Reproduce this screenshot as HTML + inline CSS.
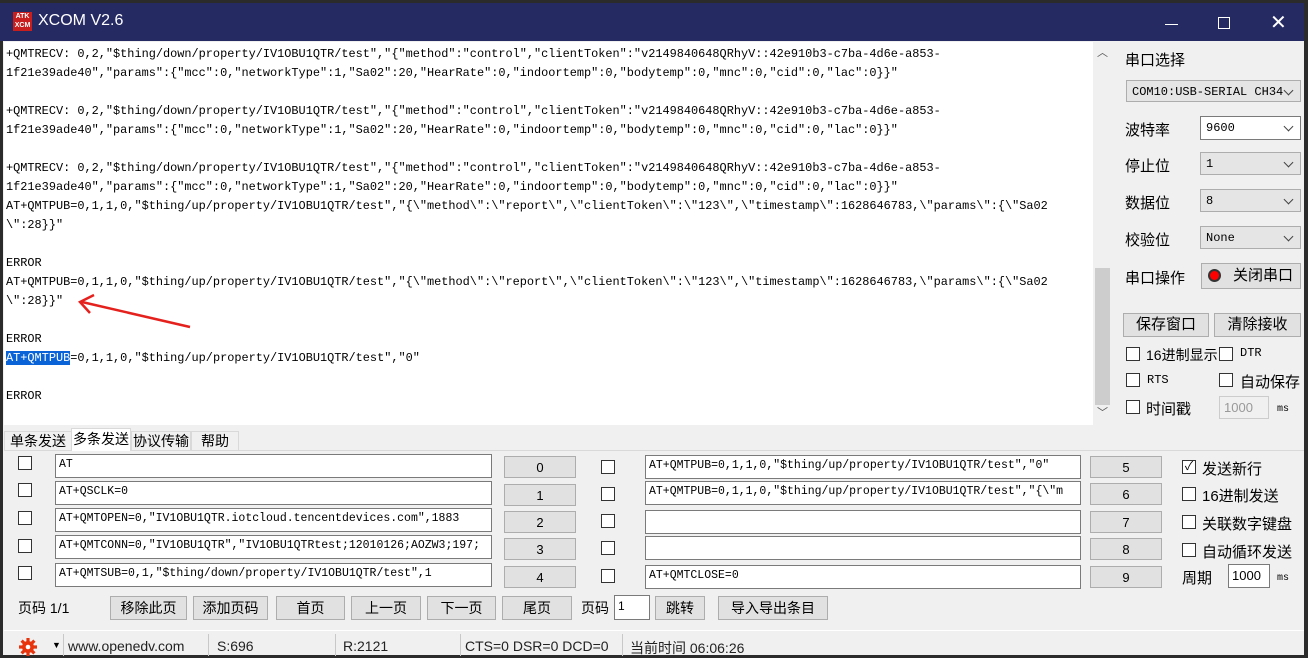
<!DOCTYPE html>
<html><head><meta charset="utf-8"><style>
*{box-sizing:border-box;margin:0;padding:0}
body{width:1308px;height:658px;background:#2b2b2b;position:relative;overflow:hidden;font-family:"Liberation Sans","Noto Sans CJK SC",sans-serif;font-size:14px;color:#000}
.a{position:absolute;white-space:nowrap}
#title{left:0;top:3px;width:1304px;height:38px;background:#252a63;color:#fff}
#win{left:3px;top:41px;width:1301px;height:614px;background:#f0f0f0}
#rx{left:4px;top:42px;width:1089px;height:383px;background:#fff;font-family:"Liberation Mono","Noto Sans CJK SC",monospace;font-size:11.9px;line-height:19px;white-space:pre;padding:3px 0 0 2px;overflow:hidden}
.lbl{font-size:15px}
.cb{position:absolute;width:14px;height:14px;border:1px solid #333;background:#fff}
.btn{position:absolute;background:#e1e1e1;border:1px solid #adadad;text-align:center;font-size:14px;white-space:nowrap}
.inp{position:absolute;background:#fff;border:1px solid #7a7a7a;font-family:"Liberation Mono","Noto Sans CJK SC",monospace;font-size:11.5px;padding:3px 0 0 3px;white-space:pre;overflow:hidden}
.combo{position:absolute;border:1px solid #adadad;background:#e5e5e5;font-size:12px;padding:4px 0 0 5px;font-family:"Liberation Mono",monospace;white-space:nowrap;overflow:hidden}
.combo:after{content:"";position:absolute;right:8px;top:6px;width:6px;height:6px;border-right:1px solid #444;border-bottom:1px solid #444;transform:rotate(45deg);background:inherit}
.sep{position:absolute;top:634px;width:1px;height:22px;background:#c8c8c8}
.st{position:absolute;top:638px;font-size:14px;color:#222;white-space:nowrap}
.tab{position:absolute;top:431px;height:20px;border:1px solid #d9d9d9;font-size:14px;line-height:18px;white-space:nowrap;overflow:hidden;text-align:center}
</style></head><body>
<div id="title" class="a">
 <div class="a" style="left:13px;top:9px;width:19px;height:19px;background:#c81e1e;color:#fff;font-size:7px;line-height:9px;text-align:center;font-weight:bold">ATK<br>XCM</div>
 <div class="a" style="left:38px;top:9px;font-size:16px">XCOM V2.6</div>
 <div class="a" style="left:1165px;top:21px;width:13px;height:1px;background:#fff"></div>
 <div class="a" style="left:1218px;top:14px;width:12px;height:12px;border:1px solid #fff"></div>
 <div class="a" style="left:1270px;top:7px;font-size:20px;font-weight:300">✕</div>
</div>
<div id="win" class="a"></div>
<div id="rx" class="a">+QMTRECV: 0,2,"$thing/down/property/IV1OBU1QTR/test","{"method":"control","clientToken":"v2149840648QRhyV::42e910b3-c7ba-4d6e-a853-
1f21e39ade40","params":{"mcc":0,"networkType":1,"Sa02":20,"HearRate":0,"indoortemp":0,"bodytemp":0,"mnc":0,"cid":0,"lac":0}}"

+QMTRECV: 0,2,"$thing/down/property/IV1OBU1QTR/test","{"method":"control","clientToken":"v2149840648QRhyV::42e910b3-c7ba-4d6e-a853-
1f21e39ade40","params":{"mcc":0,"networkType":1,"Sa02":20,"HearRate":0,"indoortemp":0,"bodytemp":0,"mnc":0,"cid":0,"lac":0}}"

+QMTRECV: 0,2,"$thing/down/property/IV1OBU1QTR/test","{"method":"control","clientToken":"v2149840648QRhyV::42e910b3-c7ba-4d6e-a853-
1f21e39ade40","params":{"mcc":0,"networkType":1,"Sa02":20,"HearRate":0,"indoortemp":0,"bodytemp":0,"mnc":0,"cid":0,"lac":0}}"
AT+QMTPUB=0,1,1,0,"$thing/up/property/IV1OBU1QTR/test","{\"method\":\"report\",\"clientToken\":\"123\",\"timestamp\":1628646783,\"params\":{\"Sa02
\":28}}"

ERROR
AT+QMTPUB=0,1,1,0,"$thing/up/property/IV1OBU1QTR/test","{\"method\":\"report\",\"clientToken\":\"123\",\"timestamp\":1628646783,\"params\":{\"Sa02
\":28}}"

ERROR
<span style="background:#0a64d8;color:#fff">AT+QMTPUB</span>=0,1,1,0,"$thing/up/property/IV1OBU1QTR/test","0"

ERROR</div>
<svg class="a" style="left:70px;top:290px" width="130" height="50"><line x1="120" y1="37" x2="12" y2="12" stroke="#e5211d" stroke-width="2.5"/><path d="M24 5 L10 12 L20 23" fill="none" stroke="#e5211d" stroke-width="2.5"/></svg>
<!-- scrollbar -->
<div class="a" style="left:1093px;top:42px;width:19px;height:383px;background:#f0f0f0"></div>
<div class="a" style="left:1095px;top:268px;width:15px;height:137px;background:#cdcdcd"></div>
<div class="a" style="left:1097px;top:44px;font-size:11px;color:#555">︿</div>
<div class="a" style="left:1097px;top:404px;font-size:11px;color:#555">﹀</div>
<!-- right panel -->
<div class="a lbl" style="left:1125px;top:49px">串口选择</div>
<div class="combo" style="left:1126px;top:80px;width:175px;height:22px;padding-right:20px">COM10:USB-SERIAL CH34</div>
<div class="a lbl" style="left:1125px;top:119px">波特率</div>
<div class="combo" style="left:1200px;top:116px;width:101px;height:24px;background:#fff;border-color:#7a7a7a">9600</div>
<div class="a lbl" style="left:1125px;top:155px">停止位</div>
<div class="combo" style="left:1200px;top:152px;width:101px;height:23px">1</div>
<div class="a lbl" style="left:1125px;top:192px">数据位</div>
<div class="combo" style="left:1200px;top:189px;width:101px;height:23px">8</div>
<div class="a lbl" style="left:1125px;top:229px">校验位</div>
<div class="combo" style="left:1200px;top:226px;width:101px;height:23px">None</div>
<div class="a lbl" style="left:1125px;top:267px">串口操作</div>
<div class="btn" style="left:1201px;top:263px;width:100px;height:26px;padding-left:24px;line-height:24px;font-size:15px">关闭串口</div>
<div class="a" style="left:1208px;top:269px;width:13px;height:13px;border-radius:50%;background:#f00;border:2px solid #333"></div>
<div class="btn" style="left:1123px;top:313px;width:86px;height:24px;line-height:22px;font-size:15px">保存窗口</div>
<div class="btn" style="left:1214px;top:313px;width:87px;height:24px;line-height:22px;font-size:15px">清除接收</div>
<div class="cb" style="left:1126px;top:347px"></div><div class="a" style="left:1146px;top:345px;font-size:14px">16进制显示</div>
<div class="cb" style="left:1219px;top:347px"></div><div class="a" style="left:1240px;top:346px;font-size:12px;font-family:'Liberation Mono'">DTR</div>
<div class="cb" style="left:1126px;top:373px"></div><div class="a" style="left:1147px;top:373px;font-size:12px;font-family:'Liberation Mono'">RTS</div>
<div class="cb" style="left:1219px;top:373px"></div><div class="a" style="left:1240px;top:371px;font-size:15px">自动保存</div>
<div class="cb" style="left:1126px;top:400px"></div><div class="a" style="left:1146px;top:398px;font-size:15px">时间戳</div>
<div class="a" style="left:1219px;top:396px;width:50px;height:23px;border:1px solid #ccc;background:#f0f0f0;color:#999;font-size:13px;padding:3px 0 0 4px">1000</div>
<div class="a" style="left:1277px;top:404px;font-size:10px;font-family:'Liberation Mono'">ms</div>
<!-- tabs -->
<div class="a" style="left:4px;top:450px;width:1300px;height:1px;background:#d9d9d9"></div>
<div class="tab" style="left:4px;width:68px;background:#f0f0f0">单条发送</div>
<div class="tab" style="left:71px;top:428px;width:60px;height:23px;border-bottom:none;background:#fff;line-height:20px">多条发送</div>
<div class="tab" style="left:131px;width:60px">协议传输</div>
<div class="tab" style="left:191px;width:48px">帮助</div>
<div class="a" style="left:4px;top:451px;width:1300px;height:175px;background:#f0f0f0"></div>
<!-- rows -->
<div class="cb" style="left:18px;top:456px"></div><div class="inp" style="left:55px;top:454px;width:437px;height:24px">AT</div><div class="btn" style="left:504px;top:456px;width:72px;height:22px;line-height:22px;font-size:13px">0</div>
<div class="cb" style="left:18px;top:483px"></div><div class="inp" style="left:55px;top:481px;width:437px;height:24px">AT+QSCLK=0</div><div class="btn" style="left:504px;top:484px;width:72px;height:22px;line-height:22px;font-size:13px">1</div>
<div class="cb" style="left:18px;top:511px"></div><div class="inp" style="left:55px;top:508px;width:437px;height:24px">AT+QMTOPEN=0,"IV1OBU1QTR.iotcloud.tencentdevices.com",1883</div><div class="btn" style="left:504px;top:511px;width:72px;height:22px;line-height:22px;font-size:13px">2</div>
<div class="cb" style="left:18px;top:539px"></div><div class="inp" style="left:55px;top:535px;width:437px;height:24px">AT+QMTCONN=0,"IV1OBU1QTR","IV1OBU1QTRtest;12010126;AOZW3;197;</div><div class="btn" style="left:504px;top:538px;width:72px;height:22px;line-height:22px;font-size:13px">3</div>
<div class="cb" style="left:18px;top:566px"></div><div class="inp" style="left:55px;top:563px;width:437px;height:24px">AT+QMTSUB=0,1,"$thing/down/property/IV1OBU1QTR/test",1</div><div class="btn" style="left:504px;top:566px;width:72px;height:22px;line-height:22px;font-size:13px">4</div>

<div class="cb" style="left:601px;top:460px"></div><div class="inp" style="left:645px;top:455px;width:436px;height:24px">AT+QMTPUB=0,1,1,0,"$thing/up/property/IV1OBU1QTR/test","0"</div><div class="btn" style="left:1090px;top:456px;width:72px;height:22px;line-height:22px;font-size:13px">5</div>
<div class="cb" style="left:601px;top:487px"></div><div class="inp" style="left:645px;top:481px;width:436px;height:24px">AT+QMTPUB=0,1,1,0,"$thing/up/property/IV1OBU1QTR/test","{\"m</div><div class="btn" style="left:1090px;top:483px;width:72px;height:22px;line-height:22px;font-size:13px">6</div>
<div class="cb" style="left:601px;top:514px"></div><div class="inp" style="left:645px;top:510px;width:436px;height:24px"></div><div class="btn" style="left:1090px;top:511px;width:72px;height:22px;line-height:22px;font-size:13px">7</div>
<div class="cb" style="left:601px;top:541px"></div><div class="inp" style="left:645px;top:536px;width:436px;height:24px"></div><div class="btn" style="left:1090px;top:538px;width:72px;height:22px;line-height:22px;font-size:13px">8</div>
<div class="cb" style="left:601px;top:569px"></div><div class="inp" style="left:645px;top:565px;width:436px;height:24px">AT+QMTCLOSE=0</div><div class="btn" style="left:1090px;top:566px;width:72px;height:22px;line-height:22px;font-size:13px">9</div>

<div class="cb" style="left:1182px;top:460px;text-align:center;line-height:11px;font-size:12px">✓</div><div class="a" style="left:1202px;top:458px;font-size:15px">发送新行</div>
<div class="cb" style="left:1182px;top:487px"></div><div class="a" style="left:1202px;top:485px;font-size:15px">16进制发送</div>
<div class="cb" style="left:1182px;top:515px"></div><div class="a" style="left:1202px;top:513px;font-size:15px">关联数字键盘</div>
<div class="cb" style="left:1182px;top:543px"></div><div class="a" style="left:1202px;top:541px;font-size:15px">自动循环发送</div>
<div class="a" style="left:1182px;top:567px;font-size:15px">周期</div>
<div class="a" style="left:1228px;top:564px;width:42px;height:24px;border:1px solid #7a7a7a;background:#fff;font-size:13px;padding:3px 0 0 3px">1000</div>
<div class="a" style="left:1277px;top:573px;font-size:10px;font-family:'Liberation Mono'">ms</div>
<!-- page row -->
<div class="a" style="left:18px;top:598px;font-size:14px">页码 1/1</div>
<div class="btn" style="left:110px;top:596px;width:77px;height:24px;line-height:22px">移除此页</div>
<div class="btn" style="left:193px;top:596px;width:75px;height:24px;line-height:22px">添加页码</div>
<div class="btn" style="left:276px;top:596px;width:69px;height:24px;line-height:22px">首页</div>
<div class="btn" style="left:351px;top:596px;width:70px;height:24px;line-height:22px">上一页</div>
<div class="btn" style="left:427px;top:596px;width:69px;height:24px;line-height:22px">下一页</div>
<div class="btn" style="left:502px;top:596px;width:70px;height:24px;line-height:22px">尾页</div>
<div class="a" style="left:581px;top:598px;font-size:14px">页码</div>
<div class="a" style="left:614px;top:595px;width:36px;height:25px;border:1px solid #7a7a7a;background:#fff;font-size:12px;padding:3px 0 0 3px">1</div>
<div class="btn" style="left:655px;top:596px;width:50px;height:24px;line-height:22px">跳转</div>
<div class="btn" style="left:718px;top:596px;width:110px;height:24px;line-height:22px">导入导出条目</div>
<!-- status -->
<div class="a" style="left:4px;top:630px;width:1300px;height:1px;background:#fff"></div>
<svg class="a" style="left:18px;top:637px" width="20" height="20" viewBox="0 0 20 20"><g fill="#e8340c"><circle cx="10" cy="10" r="6"/><g stroke="#e8340c" stroke-width="3.2"><line x1="10" y1="1" x2="10" y2="19"/><line x1="1" y1="10" x2="19" y2="10"/><line x1="3.6" y1="3.6" x2="16.4" y2="16.4"/><line x1="16.4" y1="3.6" x2="3.6" y2="16.4"/></g><circle cx="10" cy="10" r="2.3" fill="#fff"/></g></svg>
<div class="a" style="left:52px;top:640px;font-size:9px">▼</div>
<div class="sep" style="left:63px"></div><div class="st" style="left:68px">www.openedv.com</div>
<div class="sep" style="left:208px"></div><div class="st" style="left:217px">S:696</div>
<div class="sep" style="left:335px"></div><div class="st" style="left:343px">R:2121</div>
<div class="sep" style="left:460px"></div><div class="st" style="left:465px">CTS=0 DSR=0 DCD=0</div>
<div class="sep" style="left:622px"></div><div class="st" style="left:630px">当前时间 06:06:26</div>
</body></html>
